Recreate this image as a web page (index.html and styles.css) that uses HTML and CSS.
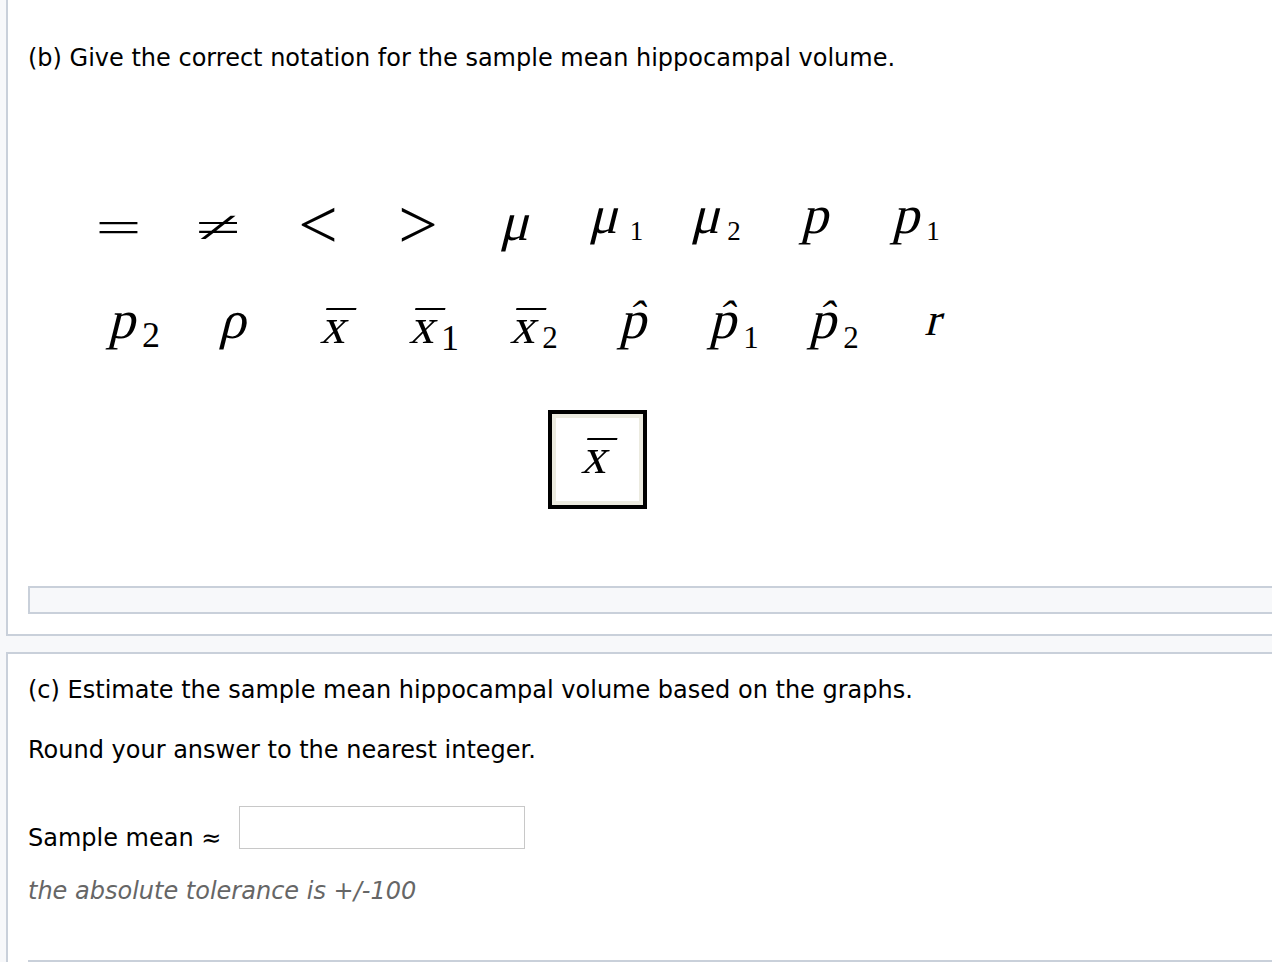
FILE: index.html
```html
<!DOCTYPE html>
<html>
<head>
<meta charset="utf-8">
<link rel="stylesheet" href="styles.css">
</head>
<body>
<div class="page">
  <section class="panel panel-b">
    <p class="prompt">(b) Give the correct notation for the sample mean hippocampal volume.</p>
    <div class="symrow row1">
      <span class="cell"><span class="rel eq">=</span></span>
      <span class="cell"><span class="rel eq">≠</span></span>
      <span class="cell"><span class="rel lt">&lt;</span></span>
      <span class="cell"><span class="rel lt">&gt;</span></span>
      <span class="cell"><span class="mi lo">μ</span></span>
      <span class="cell"><span class="mi">μ</span><span class="sub s1 wide">1</span></span>
      <span class="cell"><span class="mi">μ</span><span class="sub s1">2</span></span>
      <span class="cell"><span class="mi">p</span></span>
      <span class="cell"><span class="mi">p</span><span class="sub s1">1</span></span>
    </div>
    <div class="symrow row2">
      <span class="cell"><span class="mi up">p</span><span class="sub big d6">2</span></span>
      <span class="cell"><span class="mi up">ρ</span></span>
      <span class="cell"><span class="mi bar dn">x</span></span>
      <span class="cell"><span class="mi bar dn">x</span><span class="sub big d12">1</span></span>
      <span class="cell"><span class="mi bar dn">x</span><span class="sub mid d10">2</span></span>
      <span class="cell"><span class="mi hat">p</span></span>
      <span class="cell"><span class="mi hat">p</span><span class="sub mid d10">1</span></span>
      <span class="cell"><span class="mi hat">p</span><span class="sub mid d10">2</span></span>
      <span class="cell"><span class="mi small-r">r</span></span>
    </div>
    <div class="chosen"><span class="mi bar">x</span></div>
    <div class="feedback"></div>
  </section>
  <section class="panel panel-c">
    <p class="prompt">(c) Estimate the sample mean hippocampal volume based on the graphs.</p>
    <p class="prompt round">Round your answer to the nearest integer.</p>
    <div class="answer-row">
      <span class="label">Sample mean ≈</span>
      <input class="answer" type="text">
    </div>
    <p class="tolerance">the absolute tolerance is +/-100</p>
    <div class="feedback feedback-c"></div>
  </section>
</div>
</body>
</html>
```
FILE: styles.css
```css
html, body {
  margin: 0;
  padding: 0;
  overflow: hidden;
  background: #f7f8fa;
}
body {
  font-family: "DejaVu Sans", Verdana, sans-serif;
  font-size: 24px;
  color: #000;
}
.page {
  padding-left: 6px;
  width: 1330px;
}
.panel {
  background: #fff;
  border: 2px solid #c9d0da;
  border-right: 0;
  padding-left: 20px;
}
.panel-b {
  border-top: 0;
  padding-top: 44px;
  padding-bottom: 20px;
}
.panel-c {
  margin-top: 16px;
  padding-top: 22px;
  border-bottom: 0;
}
.prompt {
  margin: 0;
  line-height: 28px;
}
.round {
  margin-top: 32px;
}

/* symbol palette */
.symrow {
  display: grid;
  grid-template-columns: repeat(9, 100px);
  font-family: "Liberation Serif", "Times New Roman", serif;
  font-size: 54px;
  line-height: 60px;
  height: 60px;
}
.row1 {
  margin-top: 113px;
  margin-left: 40px;
}
.row2 {
  margin-top: 45px;
  margin-left: 58px;
}
.cell {
  text-align: center;
  white-space: nowrap;
}
.mi {
  font-style: normal;
  display: inline-block;
  position: relative;
  transform: skewX(-14deg);
}
.lo { vertical-align: -7px; }
.up { vertical-align: 3px; }
.dn { vertical-align: -5px; }
.small-r { vertical-align: 4px; font-size: 46px; }

.rel {
  line-height: 0;
  display: inline-block;
}
.eq {
  font-size: 44px;
  transform: scaleX(1.85);
  vertical-align: -9px;
}
.lt {
  font-size: 70px;
  vertical-align: -15px;
}
.sub {
  line-height: 0;
  margin-left: 3px;
}
.s1 {
  font-size: 27px;
  vertical-align: -7px;
}
.wide { margin-left: 8px; }
.big { font-size: 36px; }
.mid { font-size: 31px; }
.d6 { vertical-align: -6px; }
.d10 { vertical-align: -10px; }
.d12 { vertical-align: -12px; }

.bar {
  font-size: 50px;
}
.bar::before {
  content: "";
  position: absolute;
  left: -2px;
  right: -3px;
  top: 12px;
  height: 2px;
  background: #000;
}
.hat::after {
  content: "\02C6";
  position: absolute;
  left: 0;
  right: 0;
  top: 7px;
  text-align: center;
  font-size: 44px;
  line-height: 40px;
}

/* selected answer */
.chosen {
  margin-top: 60px;
  margin-left: 520px;
  width: 91px;
  height: 80px;
  padding-top: 11px;
  border: 4px solid #000;
  box-shadow: inset 0 0 0 4px #ecebe0;
  font-family: "Liberation Serif", "Times New Roman", serif;
  font-size: 54px;
  line-height: 60px;
  text-align: center;
}
.feedback {
  margin-top: 77px;
  height: 24px;
  background: #f7f8fa;
  border: 2px solid #c9d0da;
  border-right: 0;
}

/* part c */
.answer-row {
  display: flex;
  align-items: flex-end;
  margin-top: 42px;
}
.label {
  line-height: 28px;
  margin-bottom: -3px;
}
.answer {
  margin: 0 0 0 18px;
  width: 286px;
  height: 43px;
  box-sizing: border-box;
  border: 1px solid #c8c8c8;
  border-radius: 0;
  padding: 0;
  background: #fff;
  outline: none;
}
.tolerance {
  margin: 28px 0 0;
  line-height: 28px;
  font-style: italic;
  color: #666;
}
.feedback-c {
  margin-top: 55px;
}
```
